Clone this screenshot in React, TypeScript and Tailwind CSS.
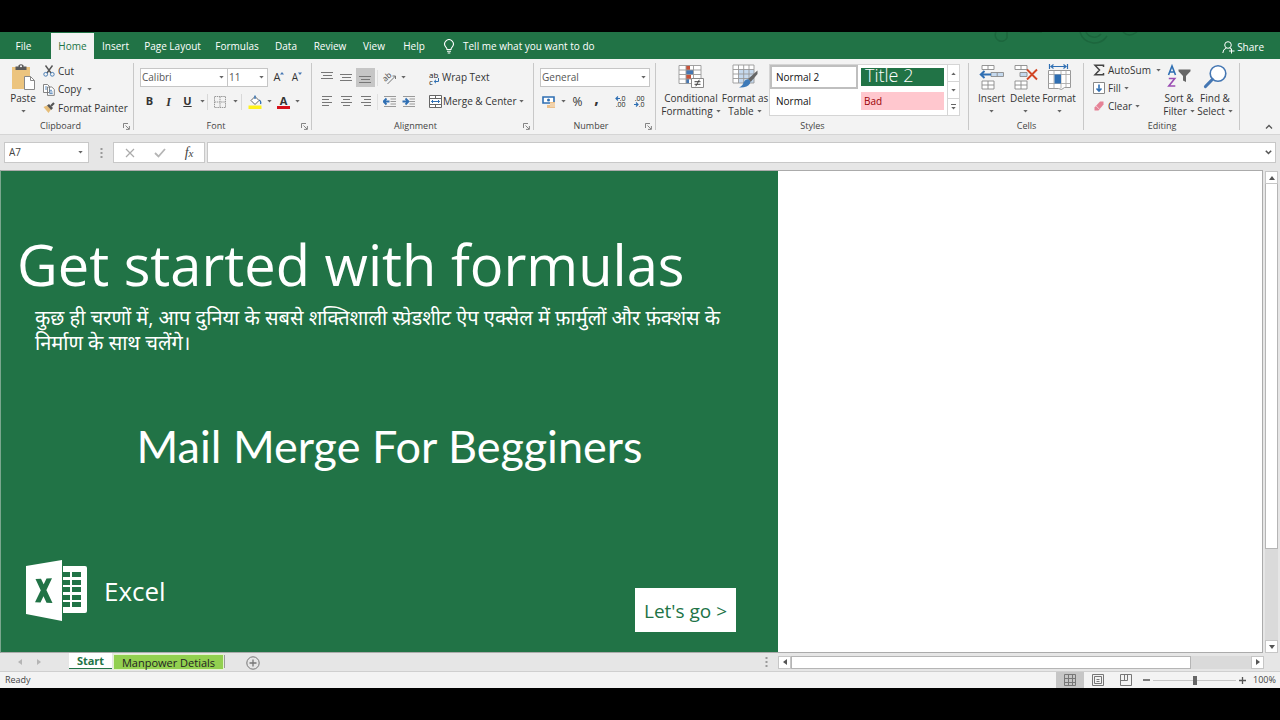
import type { ReactNode } from "react";

const tabs = [
  { label: "File", width: "w-[51px] pr-1" },
  { label: "Home", width: "w-[43px]", active: true },
  { label: "Insert", width: "w-[43px]" },
  { label: "Page Layout", width: "w-[71px]" },
  { label: "Formulas", width: "w-[58px]" },
  { label: "Data", width: "w-[40px]" },
  { label: "Review", width: "w-[48px]" },
  { label: "View", width: "w-[40px]" },
  { label: "Help", width: "w-[40px]" },
];

function Caret() {
  return (
    <svg width="5" height="3" viewBox="0 0 5 3" className="shrink-0" aria-hidden="true">
      <path d="M0.300 0h4.400L2.500 2.600z" fill="#666" />
    </svg>
  );
}

function CaretButton({ label, className = "w-3" }: { label: string; className?: string }) {
  return (
    <button aria-label={label} className={`flex h-full shrink-0 items-center justify-center ${className}`}>
      <Caret />
    </button>
  );
}

function IconButton({ label, className = "w-[19px]", children }: { label: string; className?: string; children: ReactNode }) {
  return (
    <button aria-label={label} className={`flex h-full shrink-0 items-center justify-center ${className}`}>
      {children}
    </button>
  );
}

function Divider() {
  return <span className="h-4 w-px shrink-0 bg-[#d8d8d8]" />;
}

function Launcher({ label }: { label: string }) {
  return (
    <button aria-label={label} className="absolute right-1 bottom-1">
      <svg width="7" height="7" viewBox="0 0 7 7" fill="none" stroke="#777" strokeWidth="0.9">
        <path d="M0.5 5V0.5H5M2.5 2.5L6 6M6.4 3v3.4H3" />
      </svg>
    </button>
  );
}

function Group({ name, className, launcher, children }: { name: string; className: string; launcher?: boolean; children: ReactNode }) {
  return (
    <section aria-label={name} className={`relative flex shrink-0 flex-col ${className}`}>
      <div className="h-[61px]">{children}</div>
      <div className="text-center text-[9px] leading-4 text-[#444]">{name}</div>
      {launcher && <Launcher label={`${name} settings`} />}
      <span className="absolute top-1 right-0 bottom-1 w-px bg-[#c8c8c8]" />
    </section>
  );
}

function BigButton({ icon, first, second, className }: { icon: ReactNode; first: string; second?: string; className: string }) {
  return (
    <button className={`flex shrink-0 flex-col items-center pt-[5px] leading-[13px] whitespace-nowrap ${className}`}>
      <span className="flex h-7 items-start">{icon}</span>
      <span>{first}</span>
      <span className="flex h-[13px] items-center gap-[3px]">
        {second}
        <Caret />
      </span>
    </button>
  );
}

function Lines({ y, widths }: { y: number; widths: [number, number][] }) {
  return (
    <svg width="13" height="13" viewBox="0 0 13 13" stroke="#777" strokeWidth="1" aria-hidden="true">
      {widths.map(([a, b], i) => (
        <path key={i} d={`M${a} ${y + i * 3}H${b}`} />
      ))}
    </svg>
  );
}

function Indent({ right }: { right?: boolean }) {
  return (
    <svg width="14" height="13" viewBox="0 0 14 13" fill="none" aria-hidden="true">
      <path d="M1 1.5h12M7.500 4h5.500M7.500 6.500h5.500M7.500 9h5.500M1 11.5h12" stroke="#999" />
      <path d={right ? "M0.5 6.5H6M3.5 3.500L6.5 6.5 3.5 9.500" : "M6.500 6.5H1M3.5 3.500L0.5 6.5 3.5 9.500"} stroke="#2f6fb3" strokeWidth="1.800" />
    </svg>
  );
}

function PasteIcon() {
  return (
    <svg width="24" height="27" viewBox="0 0 24 27" aria-hidden="true">
      <path d="M1 3h18v22H1z" fill="#ecc47e" />
      <path d="M4.5 2.5h3V1.3Q10 -0.6 12.5 1.3v1.2h3V6h-11z" fill="#595959" />
      <circle cx="10" cy="2.2" r="1" fill="#fff" />
      <path d="M13.5 12.5h6l4 4v9h-10z" fill="#fff" stroke="#888" />
      <path d="M19.5 12.5v4h4" fill="none" stroke="#888" />
    </svg>
  );
}

function CutIcon() {
  return (
    <svg width="12" height="12" viewBox="0 0 12 12" fill="none" aria-hidden="true">
      <path d="M2.5 0.5L8 8M9.5 0.5L4 8" stroke="#555" strokeWidth="1.4" />
      <circle cx="2.7" cy="9.3" r="1.9" stroke="#4c7fb5" />
      <circle cx="9.3" cy="9.3" r="1.9" stroke="#4c7fb5" />
    </svg>
  );
}

function CopyIcon() {
  return (
    <svg width="12" height="12" viewBox="0 0 12 12" fill="#fff" stroke="#777" strokeWidth="0.9" aria-hidden="true">
      <path d="M0.5 0.5h4l2 2v6h-6zM4.5 3h4.3l2.5 2.4v6H4.5z" />
      <path d="M2 3h2M2 5h2M6.3 6.3H9M6.3 8h3.4M6.3 9.6h3.4" stroke="#4c7fb5" />
    </svg>
  );
}

function PainterIcon() {
  return (
    <svg width="12" height="12" viewBox="0 0 12 12" aria-hidden="true">
      <path d="M0.5 5L4 3.5 8 7.5 5.5 11z" fill="#e6bd78" />
      <path d="M4 3.6L6 2l4 4-1.8 1.9z" fill="#555" />
      <path d="M8 4l3-3" stroke="#555" strokeWidth="2.2" />
    </svg>
  );
}

function ConditionalIcon() {
  return (
    <svg width="26" height="25" viewBox="0 0 26 25" aria-hidden="true">
      <path d="M1 1.5h22v18H1z" fill="#fff" />
      <path d="M8 1.5h4v4.500H8zM8 10.500h5v4.500H8z" fill="#c9533a" />
      <path d="M8 6h7v4.500H8zM8 15h3v4.500H8z" fill="#4577b3" />
      <path d="M1 1.500h22v18H1zM1 6h22M1 10.500h22M1 15h22M8 1.500v18M15.500 1.500v18" fill="none" stroke="#999" strokeWidth="0.9" />
      <path d="M13.500 14.500h12v9h-12z" fill="#fff" stroke="#888" />
      <path d="M16.500 17.700h6M16.500 20.300h6M21.300 15.800l-3.500 6.400" stroke="#444" />
    </svg>
  );
}

function TableIcon() {
  return (
    <svg width="26" height="25" viewBox="0 0 26 25" aria-hidden="true">
      <path d="M1 1h21v18H1z" fill="#fff" />
      <path d="M6.500 5.500H22V19H6.500z" fill="#c5d9ee" />
      <path d="M1 1h21v18H1zM1 5.500h21M1 10h21M1 14.500h21M6.500 1v18M11.700 1v18M17 1v18" fill="none" stroke="#999" strokeWidth="0.9" />
      <path d="M25.500 6.500L16 15l2.700 3L25.500 10z" fill="#666" />
      <path d="M15.500 15.300Q19 16 18 19.500 15.500 24 7 23.500q4-2 4.500-5 1.500-3 4-3.200z" fill="#3e7ab8" />
    </svg>
  );
}

function CellsIcon({ kind }: { kind: "insert" | "delete" }) {
  return (
    <svg width="26" height="26" viewBox="0 0 26 26" fill="#fff" stroke="#8a8a8a" strokeWidth="0.9" aria-hidden="true">
      <path d="M3 1.500h12v4H3zM9 1.500v4M3 17h12v8H3zM3 21h12M9 17v8" />
      {kind === "insert" ? (
        <>
          <path d="M12 8.500h12.500v4H12zM18.200 8.500v4" fill="#c5d9ee" />
          <path d="M12 10.500H2M5.500 7L1.800 10.500 5.500 14" fill="none" stroke="#2f6fb3" strokeWidth="2" />
        </>
      ) : (
        <>
          <path d="M8 8.500h7v4H8z" fill="#c5d9ee" />
          <path d="M15 5.500l10 10M25 5.500l-10 10" stroke="#d24726" strokeWidth="1.900" />
        </>
      )}
    </svg>
  );
}

function FormatIcon() {
  return (
    <svg width="25" height="26" viewBox="0 0 25 26" fill="none" aria-hidden="true">
      <path d="M2.500 0v5M20.500 0v5M4 2.500h15M6.500 0.500l-2.500 2 2.500 2M16.500 0.500l2.500 2-2.500 2" stroke="#2f6fb3" strokeWidth="1.200" />
      <path d="M1.500 6.500h22v17h-6l-3 2-3-1H1.500z" fill="#fff" stroke="#999" />
      <path d="M1.500 10.500h22M1.500 19.500h22M7 6.500v18M14 6.500v18M19 6.500v17" stroke="#aaa" strokeWidth="0.900" />
      <path d="M7.500 10.500h6.500v9H7.500z" fill="#2f6fb3" />
    </svg>
  );
}

function SortIcon() {
  return (
    <svg width="24" height="25" viewBox="0 0 24 25" fill="none" aria-hidden="true">
      <path d="M1.500 11L5 2l3.500 9M2.700 8h4.600" stroke="#2f6fb3" strokeWidth="1.600" />
      <path d="M1.800 14.500h6L1.800 22h6.500" stroke="#9a4db3" strokeWidth="1.600" />
      <path d="M11.500 5.500h12v1.800L19 12v6l-3-1.500V12l-4.500-4.700z" fill="#666" />
    </svg>
  );
}

function FindIcon() {
  return (
    <svg width="25" height="25" viewBox="0 0 25 25" fill="none" aria-hidden="true">
      <circle cx="15" cy="9.500" r="7.800" fill="#fff" stroke="#4577b3" strokeWidth="1.600" />
      <path d="M9.300 15.500L2.500 22.500" stroke="#4577b3" strokeWidth="3.200" strokeLinecap="round" />
    </svg>
  );
}

function ExcelLogo() {
  return (
    <svg width="61" height="61" viewBox="0 0 61 61" aria-hidden="true">
      <path d="M0 6L36 0v61L0 54z" fill="#fff" />
      <path d="M37 6h22q2 0 2 2v43q0 2-2 2H37z" fill="#fff" />
      <path d="M37 12h7v5h-7zM46 12h9v5h-9zM37 20h7v5h-7zM46 20h9v5h-9zM37 27h7v5h-7zM46 27h9v5h-9zM37 35h7v5h-7zM46 35h9v5h-9zM37 42h7v5h-7zM46 42h9v5h-9z" fill="#217346" />
      <path d="M9.500 19l5.500-0.300L26.500 43l-6-0.300z M20.500 18.500l5.500-0.300L14.500 42.500 9 42.200z" fill="#217346" />
    </svg>
  );
}

function Arrow({ dir, muted }: { dir: "up" | "down" | "left" | "right"; muted?: boolean }) {
  const paths = { up: "M0 5h6L3 1z", down: "M0 1h6L3 5z", left: "M5 0v6L1 3z", right: "M1 0v6l4-3z" };
  return (
    <svg width="6" height="6" viewBox="0 0 6 6" aria-hidden="true">
      <path d={paths[dir]} fill={muted ? "#b5b5b5" : "#555"} />
    </svg>
  );
}

function SizeMark({ up }: { up?: boolean }) {
  return (
    <svg width="4" height="3" viewBox="0 0 4 3" className="mb-2" aria-hidden="true">
      <path d={up ? "M0 2.500h4L2 0z" : "M0 0.500h4L2 3z"} fill="#4577b3" />
    </svg>
  );
}

function Dots() {
  return (
    <svg width="3" height="10" viewBox="0 0 3 10" fill="#999" aria-hidden="true">
      <path d="M0.500 0h2v2h-2zM0.500 4h2v2h-2zM0.500 8h2v2h-2z" />
    </svg>
  );
}

function Picker({ label, value, className }: { label: string; value: string; className: string }) {
  return (
    <span className={`relative flex h-[19px] shrink-0 items-center border border-[#c6c6c6] bg-white ${className}`}>
      <select aria-label={label} defaultValue={value} className="h-full w-full appearance-none bg-transparent pl-px text-[#555] outline-none">
        <option>{value}</option>
      </select>
      <span className="pointer-events-none absolute right-[3px]">
        <Caret />
      </span>
    </span>
  );
}

function TitleBar() {
  return (
    <header className="flex h-[27px] shrink-0 items-stretch overflow-hidden bg-[#217346] text-white">
      <nav className="flex pt-px">
        {tabs.map((t) => (
          <button key={t.label} className={`${t.width} shrink-0 whitespace-nowrap ${t.active ? "bg-[#f3f3f3] text-[#217346]" : ""}`}>
            {t.label}
          </button>
        ))}
      </nav>
      <button className="ml-[9px] flex items-center gap-2 pt-px whitespace-nowrap">
        <svg width="12" height="15" viewBox="0 0 12 15" fill="none" stroke="#fff" strokeWidth="1.100" aria-hidden="true">
          <path d="M4 10.500Q4 9 2.700 7.800A4.300 4.300 0 1 1 9.300 7.800Q8 9 8 10.500zM4 12.300h4M4.700 14h2.600" />
        </svg>
        Tell me what you want to do
      </button>
      <svg width="170" height="27" viewBox="0 0 170 27" fill="none" stroke="#1c663d" strokeWidth="1.500" className="mr-16 ml-auto" aria-hidden="true">
        <path d="M8 0a6 6 0 0 0 11 6V0M32 0h22M92 0a15 15 0 0 0 27 4M98 0a9 9 0 0 0 15 2M135 0q6 6 14 0" />
      </svg>
      <button className="mr-4 flex items-center gap-0.5 pt-[3px]">
        <svg width="13" height="13" viewBox="0 0 13 13" fill="none" stroke="#fff" aria-hidden="true">
          <circle cx="6" cy="4" r="3.300" />
          <path d="M0.800 12Q1 8 4.500 7M7.500 7L9 8M9.500 7.500v5M7 10h5.500" />
        </svg>
        Share
      </button>
    </header>
  );
}

function Ribbon() {
  return (
    <div className="flex h-[76px] shrink-0 overflow-hidden border-b border-[#d5d5d5] bg-[#f3f3f3]">
      <Group name="Clipboard" className="w-[134px] pr-[13px]" launcher>
        <div className="flex pl-[5px]">
          <BigButton icon={<PasteIcon />} first="Paste" className="w-9" />
          <div className="flex flex-col pt-[3px] pl-0.5">
            <button className="flex h-[18px] items-center gap-[3px]"><CutIcon />Cut</button>
            <div className="flex h-[19px] items-center gap-1">
              <button className="flex items-center gap-[3px]"><CopyIcon />Copy</button>
              <CaretButton label="Copy options" className="w-2" />
            </div>
            <button className="flex h-[18px] items-center gap-[3px] whitespace-nowrap"><PainterIcon />Format Painter</button>
          </div>
        </div>
      </Group>

      <Group name="Font" className="w-[178px] pr-3.5" launcher>
        <div className="flex flex-col gap-[5px] pt-[9px] pl-1.5">
          <div className="flex h-[19px] items-center">
            <Picker label="Font name" value="Calibri" className="w-[88px]" />
            <Picker label="Font size" value="11" className="w-10 border-l-0" />
            <IconButton label="Increase font size" className="ml-0.5 w-[18px]">
              <span className="text-[11px]">A</span><SizeMark up />
            </IconButton>
            <IconButton label="Decrease font size" className="w-[18px]">
              <span className="text-[10px]">A</span><SizeMark />
            </IconButton>
          </div>
          <div className="flex h-[19px] items-center">
            <IconButton label="Bold"><b className="text-[11px]">B</b></IconButton>
            <IconButton label="Italic"><i className="font-['Liberation_Serif',serif] text-xs font-bold">I</i></IconButton>
            <IconButton label="Underline"><b className="text-[11px] underline">U</b></IconButton>
            <CaretButton label="Underline options" className="w-2.5" />
            <span className="w-0.5" />
            <Divider />
            <IconButton label="Borders" className="ml-[3px] w-[18px]">
              <svg width="12" height="12" viewBox="0 0 12 12" fill="none" stroke="#999">
                <path d="M0.500 0.500h11v11H0.500zM6 0.500v11M0.500 6h11" strokeDasharray="1.500 0.700" />
              </svg>
            </IconButton>
            <CaretButton label="Border options" />
            <Divider />
            <IconButton label="Fill color" className="ml-[3px] w-[19px]">
              <svg width="14" height="14" viewBox="0 0 14 14" fill="none">
                <path d="M3 5.500L7 1.500l4 4-4 4z" fill="#fff" stroke="#666" />
                <path d="M7 4V0.500M11 5q2.500 1 1.500 4" stroke="#2f6fb3" strokeWidth="1.300" />
                <path d="M0.500 10.500h13V14H0.500z" fill="#fff21a" />
              </svg>
            </IconButton>
            <CaretButton label="Fill color options" className="w-2.5" />
            <IconButton label="Font color">
              <span className="flex w-[13px] flex-col items-center border-b-[3px] border-[#d6101a] text-[11px] leading-[11px] font-bold">A</span>
            </IconButton>
            <CaretButton label="Font color options" className="w-2" />
          </div>
        </div>
      </Group>

      <Group name="Alignment" className="w-[222px] pr-[15px]" launcher>
        <div className="flex pt-[9px] pl-1.5">
          <div className="flex flex-col gap-[5px]">
            <div className="flex h-[19px] items-center">
              <IconButton label="Top align"><Lines y={1.5} widths={[[0, 12], [2, 11], [0, 12]]} /></IconButton>
              <IconButton label="Middle align"><Lines y={3.5} widths={[[0, 12], [2, 11], [0, 12]]} /></IconButton>
              <IconButton label="Bottom align" className="w-[19px] bg-[#c6c6c6]"><Lines y={5.5} widths={[[0, 12], [2, 11], [0, 12]]} /></IconButton>
              <span className="mx-0.5 h-4 w-px bg-[#e0e0e0]" />
              <IconButton label="Orientation">
                <svg width="16" height="16" viewBox="0 0 16 16" aria-hidden="true" fill="none">
                  <text x="2" y="11" fontSize="8" fill="#444" transform="rotate(-42 4 10)">ab</text>
                  <path d="M5.500 14L13.500 6M10.500 6h3v3" stroke="#777" />
                </svg>
              </IconButton>
              <CaretButton label="Orientation options" className="w-2" />
            </div>
            <div className="flex h-[19px] items-center">
              <IconButton label="Align left"><Lines y={1.5} widths={[[1, 11], [1, 8], [1, 11], [1, 8]]} /></IconButton>
              <IconButton label="Center"><Lines y={1.5} widths={[[1, 12], [3, 10], [1, 12], [3, 10]]} /></IconButton>
              <IconButton label="Align right"><Lines y={1.5} widths={[[2, 12], [5, 12], [2, 12], [5, 12]]} /></IconButton>
              <span className="mx-0.5 h-4 w-px bg-[#e0e0e0]" />
              <IconButton label="Decrease indent"><Indent /></IconButton>
              <IconButton label="Increase indent"><Indent right /></IconButton>
            </div>
          </div>
          <span className="ml-1.5 h-12 w-px bg-[#d8d8d8]" />
          <div className="flex flex-col gap-[5px] pl-[5px]">
            <button className="flex h-[19px] items-center whitespace-nowrap">
              <span className="flex w-[13px] flex-col text-left text-[8px] leading-[7px] text-[#222]">
                <span>ab</span>
                <span className="flex items-center">
                  c
                  <svg width="6" height="6" viewBox="0 0 6 6" fill="none" stroke="#2f6fb3" aria-hidden="true"><path d="M5.500 0v3.500H1.500M3 1.800L1.200 3.500 3 5.200" /></svg>
                </span>
              </span>
              Wrap Text
            </button>
            <div className="flex h-[19px] items-center">
              <button className="flex items-center gap-px whitespace-nowrap">
                <svg width="13" height="13" viewBox="0 0 13 13" fill="#fff" stroke="#666" aria-hidden="true">
                  <path d="M0.500 0.500h12v12H0.500zM0.500 3.500h12M0.500 9.500h12M6.500 0.500v3M6.500 9.500v3" />
                  <path d="M2.500 6.500h8M4 5L2.500 6.500 4 8M9 5l1.500 1.500L9 8" fill="none" stroke="#2f6fb3" />
                </svg>
                Merge &amp; Center
              </button>
              <CaretButton label="Merge options" className="w-2.5" />
            </div>
          </div>
        </div>
      </Group>

      <Group name="Number" className="w-[122px] pr-2" launcher>
        <div className="flex flex-col gap-[5px] pt-[9px] pl-1.5">
          <Picker label="Number format" value="General" className="w-[110px]" />
          <div className="flex h-[19px] items-center">
            <IconButton label="Accounting format" className="w-[18px]">
              <svg width="14" height="14" viewBox="0 0 14 14" aria-hidden="true" fill="none">
                <path d="M1 2h11v6H1z" fill="#fff" stroke="#2f6fb3" strokeWidth="1.600" />
                <circle cx="6.500" cy="5" r="1.500" fill="#2f6fb3" />
                <path d="M8 7h5v6H8zM5 10h4v3H5z" fill="#ecc08a" />
                <path d="M8 9h5M8 11h5" stroke="#fff" strokeWidth="0.600" />
              </svg>
            </IconButton>
            <CaretButton label="Accounting options" className="w-2.5" />
            <IconButton label="Percent style"><span className="text-xs">%</span></IconButton>
            <IconButton label="Comma style"><span className="mb-2 text-base font-bold">,</span></IconButton>
            <span className="mx-0.5 h-4 w-px bg-[#e0e0e0]" />
            <IconButton label="Increase decimal">
              <span className="flex w-3 flex-col items-end text-[7px] leading-[6px] text-[#222]">
                <span className="flex items-center">
                  <svg width="5" height="5" viewBox="0 0 5 5" fill="none" stroke="#2f6fb3" strokeWidth="1.200" aria-hidden="true"><path d="M5 2.500H1M3 0.500l-2 2 2 2" /></svg>
                  .0
                </span>
                <span>.00</span>
              </span>
            </IconButton>
            <IconButton label="Decrease decimal">
              <span className="flex w-3 flex-col items-end text-[7px] leading-[6px] text-[#222]">
                <span>.00</span>
                <span className="flex items-center">
                  <svg width="5" height="5" viewBox="0 0 5 5" fill="none" stroke="#2f6fb3" strokeWidth="1.200" aria-hidden="true"><path d="M0 2.500h4M2 0.500l2 2-2 2" /></svg>
                  .0
                </span>
              </span>
            </IconButton>
          </div>
        </div>
      </Group>

      <Group name="Styles" className="w-[313px]">
        <div className="flex">
          <BigButton icon={<ConditionalIcon />} first="Conditional" second="Formatting" className="w-[61px] pl-[9px]" />
          <BigButton icon={<TableIcon />} first="Format as" second="Table" className="w-[52px] pl-1" />
          <div className="mt-[5px] flex h-[52px] w-[191px] border border-[#d5d5d5] bg-white text-[#111]">
            <div className="grid flex-1 grid-cols-[88px_83px] grid-rows-[24px_24px] items-center gap-x-[3px]">
              <button className="h-6 border-2 border-[#bfbfbf] pl-1 text-left">Normal 2</button>
              <button className="flex h-[18px] items-center overflow-hidden bg-[#217346] pb-1 pl-1 text-lg font-light text-white">Title 2</button>
              <button className="h-[18px] pl-1.5 text-left">Normal</button>
              <button className="h-[18px] bg-[#ffc7ce] pl-[3px] text-left text-[#9c0006]">Bad</button>
            </div>
            <div className="flex w-3 flex-col divide-y divide-[#d5d5d5] border-l border-[#d5d5d5]">
              <button aria-label="Previous styles" className="flex flex-1 items-center justify-center"><svg width="5" height="3"><path d="M0.300 3h4.400L2.500 0.400z" fill="#666" /></svg></button>
              <button aria-label="Next styles" className="flex flex-1 items-center justify-center"><Caret /></button>
              <button aria-label="More styles" className="flex flex-1 items-center justify-center"><svg width="5" height="6"><path d="M0 0h5v1H0zM0.300 3h4.400L2.500 5.600z" fill="#666" /></svg></button>
            </div>
          </div>
        </div>
      </Group>

      <Group name="Cells" className="w-[115px]">
        <div className="flex pl-1.5">
          <BigButton icon={<CellsIcon kind="insert" />} first="Insert" className="w-[33px]" />
          <BigButton icon={<CellsIcon kind="delete" />} first="Delete" className="w-[34px]" />
          <BigButton icon={<FormatIcon />} first="Format" className="w-[34px]" />
        </div>
      </Group>

      <Group name="Editing" className="w-[156px]">
        <div className="flex pl-[9px]">
          <div className="flex w-[69px] flex-col pt-0.5">
            <div className="flex h-[18px] items-center gap-1">
              <button className="flex items-center gap-[3px]">
                <svg width="12" height="12" viewBox="0 0 12 12" fill="none" stroke="#444" strokeWidth="1.500" aria-hidden="true">
                  <path d="M10.500 3V1.200H2L6.500 6 2 10.800h8.500V9" />
                </svg>
                AutoSum
              </button>
              <CaretButton label="AutoSum options" className="w-2" />
            </div>
            <button className="flex h-[18px] items-center gap-[3px]">
              <svg width="12" height="12" viewBox="0 0 12 12" fill="#fff" stroke="#888" aria-hidden="true">
                <path d="M0.500 0.500h11v11H0.500z" />
                <path d="M6 2.500V9M3.500 6.500L6 9l2.500-2.500" fill="none" stroke="#2f6fb3" strokeWidth="1.600" />
              </svg>
              Fill <Caret />
            </button>
            <button className="flex h-[18px] items-center gap-[3px]">
              <svg width="12" height="12" viewBox="0 0 12 12" aria-hidden="true">
                <path d="M7 1.500h3.500V4.500L5.500 10.500H1.500V7.500z" fill="#e58296" />
                <path d="M3 5.800L6.500 9.300" stroke="#f6ced6" />
              </svg>
              Clear <Caret />
            </button>
          </div>
          <BigButton icon={<SortIcon />} first="Sort &" second="Filter" className="w-[34px]" />
          <BigButton icon={<FindIcon />} first="Find &" second="Select" className="w-[38px]" />
        </div>
      </Group>

      <div className="flex flex-1 items-end justify-end pr-[7px] pb-1">
        <button aria-label="Collapse the ribbon">
          <svg width="8" height="6" viewBox="0 0 8 6" fill="none" stroke="#555" strokeWidth="1.300"><path d="M1 4.500l3-3 3 3" /></svg>
        </button>
      </div>
    </div>
  );
}

function FormulaBar() {
  return (
    <div className="flex h-[35px] shrink-0 items-center bg-[#e6e6e6] px-1">
      <div className="flex h-[21px] w-[85px] items-center border border-[#c8c8c8] bg-white pr-[5px]">
        <input aria-label="Name box" defaultValue="A7" className="w-full min-w-0 bg-transparent pl-1 text-[#444] outline-none" />
        <Caret />
      </div>
      <span className="flex w-6 justify-center"><Dots /></span>
      <div className="flex h-[21px] w-[92px] items-center justify-around border border-[#c8c8c8] bg-white px-px">
        <button aria-label="Cancel"><svg width="10" height="10" viewBox="0 0 10 10" fill="none" stroke="#aaa" strokeWidth="1.200"><path d="M1 1l8 8M9 1L1 9" /></svg></button>
        <button aria-label="Enter"><svg width="12" height="10" viewBox="0 0 12 10" fill="none" stroke="#b5b5b5" strokeWidth="1.800"><path d="M1 5l3.500 3.500L11 1" /></svg></button>
        <button aria-label="Insert function" className="font-['Liberation_Serif',serif] text-sm leading-4 text-[#444] italic">f<span className="text-[11px]">x</span></button>
      </div>
      <div className="ml-0.5 flex h-[21px] flex-1 items-center border border-[#c8c8c8] bg-white pr-[3px]">
        <input aria-label="Formula" className="w-full min-w-0 bg-transparent px-1 outline-none" />
        <svg width="7" height="5" viewBox="0 0 7 5" fill="none" stroke="#555" strokeWidth="1.600" aria-hidden="true"><path d="M0.800 0.800l2.700 2.700L6.200 0.800" /></svg>
      </div>
    </div>
  );
}

function Sheet() {
  return (
    <main className="flex min-h-0 flex-1 bg-[#e6e6e6]">
      <div className="flex flex-1 border border-[#ababab] border-l-[#7ba78e] bg-white">
        <div className="flex w-[777px] flex-col bg-[#217346] text-white">
          <h1 className="pt-[54px] pl-4 text-[56px] leading-[78px] whitespace-nowrap">Get started with formulas</h1>
          <p className="pt-0.5 pl-[34px] text-xl leading-[25px] whitespace-nowrap">
            कुछ ही चरणों में, आप दुनिया के सबसे शक्तिशाली स्प्रेडशीट ऐप एक्सेल में फ़ार्मुलों और फ़ंक्शंस के
            <br />
            निर्माण के साथ चलेंगे।
          </p>
          <h2 className="pt-[61px] text-center font-[Lato,sans-serif] text-[45px] leading-[60px] whitespace-nowrap">Mail Merge For Begginers</h2>
          <div className="mt-auto flex items-end justify-between pr-[42px] pb-5 pl-[25px]">
            <div className="flex items-center gap-[17px] pb-[11px]">
              <ExcelLogo />
              <span className="text-[26px] leading-9">Excel</span>
            </div>
            <button className="h-11 w-[101px] bg-white pt-0.5 text-[19px] whitespace-nowrap text-[#217346]">Let's go &gt;</button>
          </div>
        </div>
      </div>
      <div className="mr-[2px] ml-0.5 flex w-[13px] flex-col pt-px">
        <button aria-label="Scroll up" className="flex h-[13px] items-center justify-center border border-[#c6c6c6] bg-white"><Arrow dir="up" /></button>
        <div className="flex-1 bg-[#dadada]">
          <div className="h-4/5 border border-t-0 border-[#b5b5b5] bg-white" />
        </div>
        <button aria-label="Scroll down" className="flex h-[13px] items-center justify-center border border-[#c6c6c6] bg-white"><Arrow dir="down" /></button>
      </div>
    </main>
  );
}

function SheetTabs() {
  return (
    <div className="flex h-[19px] shrink-0 border-b border-[#cfcfcf] bg-[#e6e6e6]">
      <div className="flex flex-1 items-start">
        <div className="flex h-full w-[69px] items-center gap-[13px] pl-[17px]">
          <button aria-label="Previous sheet"><Arrow dir="left" muted /></button>
          <button aria-label="Next sheet"><Arrow dir="right" muted /></button>
        </div>
        <button className="h-4 w-[43px] border-b border-[#217346] bg-white text-[11px] leading-[14px] font-bold text-[#217346]">Start</button>
        <button className="mt-px ml-px h-4 w-[111px] border border-[#e4f3cf] bg-[#92d050] text-[11px] leading-[11px] whitespace-nowrap text-[#222]">Manpower Detials</button>
        <span className="mt-0.5 h-[13px] w-px bg-[#999]" />
        <button aria-label="New sheet" className="mt-[3px] ml-[21px]">
          <svg width="14" height="14" viewBox="0 0 14 14" fill="none" stroke="#777"><circle cx="7" cy="7" r="6.200" /><path d="M7 3.500v7M3.500 7h7" strokeWidth="1.300" /></svg>
        </button>
      </div>
      <div className="flex w-[515px] items-center pr-4">
        <span className="w-[13px]"><Dots /></span>
        <button aria-label="Scroll left" className="flex h-[13px] w-[13px] items-center justify-center border border-[#c6c6c6] bg-white"><Arrow dir="left" /></button>
        <div className="h-[13px] flex-1 bg-[#dadada]"><div className="h-full w-[87%] border border-[#b5b5b5] bg-white" /></div>
        <button aria-label="Scroll right" className="flex h-[13px] w-[13px] items-center justify-center border border-[#c6c6c6] bg-white"><Arrow dir="right" /></button>
      </div>
    </div>
  );
}

function StatusBar() {
  return (
    <footer className="flex h-4 shrink-0 items-center bg-[#f3f3f3] pl-[5px] text-[9px] text-[#444]">
      <span>Ready</span>
      <div className="ml-auto flex h-full items-center">
        <IconButton label="Normal view" className="w-7 bg-[#c6c6c6]">
          <svg width="12" height="12" viewBox="0 0 12 12" fill="none" stroke="#777"><path d="M0.500 0.500h11v11H0.500zM4.500 0.500v11M8.500 0.500v11M0.500 4.500h11M0.500 8.500h11" /></svg>
        </IconButton>
        <IconButton label="Page layout view" className="w-7">
          <svg width="12" height="12" viewBox="0 0 12 12" fill="none" stroke="#777"><path d="M0.500 0.500h11v11H0.500zM2.500 2.500h7v7h-7zM4.500 5.500h3M4.500 7.500h3" /></svg>
        </IconButton>
        <IconButton label="Page break view" className="w-7">
          <svg width="12" height="12" viewBox="0 0 12 12" fill="none" stroke="#777"><path d="M0.500 0.500h11v11H0.500zM0.500 6.500h7M4.500 0.500v6M7.500 0.500v6" /></svg>
        </IconButton>
        <button aria-label="Zoom out" className="w-[13px]"><svg width="7" height="7" viewBox="0 0 7 7" className="mx-auto"><path d="M0 3h7" stroke="#555" strokeWidth="1.500" /></svg></button>
        <input
          type="range"
          aria-label="Zoom"
          min={0}
          max={100}
          defaultValue={50}
          className="h-[11px] w-[83px] appearance-none bg-[linear-gradient(#c6c6c6,#c6c6c6)] bg-[length:100%_1px] bg-center bg-no-repeat [&::-webkit-slider-thumb]:h-[9px] [&::-webkit-slider-thumb]:w-1 [&::-webkit-slider-thumb]:appearance-none [&::-webkit-slider-thumb]:bg-[#666]"
        />
        <button aria-label="Zoom in" className="w-[13px]"><svg width="7" height="7" viewBox="0 0 7 7" className="mx-auto"><path d="M0 3.500h7M3.500 0v7" stroke="#555" strokeWidth="1.300" /></svg></button>
        <span className="w-[31px] pl-1">100%</span>
      </div>
    </footer>
  );
}

export default function App() {
  return (
    <div className="flex h-screen flex-col overflow-hidden bg-black py-8 font-['Open_Sans','Noto_Sans',sans-serif] text-[10px] text-[#333]">
      <TitleBar />
      <Ribbon />
      <FormulaBar />
      <Sheet />
      <SheetTabs />
      <StatusBar />
    </div>
  );
}
